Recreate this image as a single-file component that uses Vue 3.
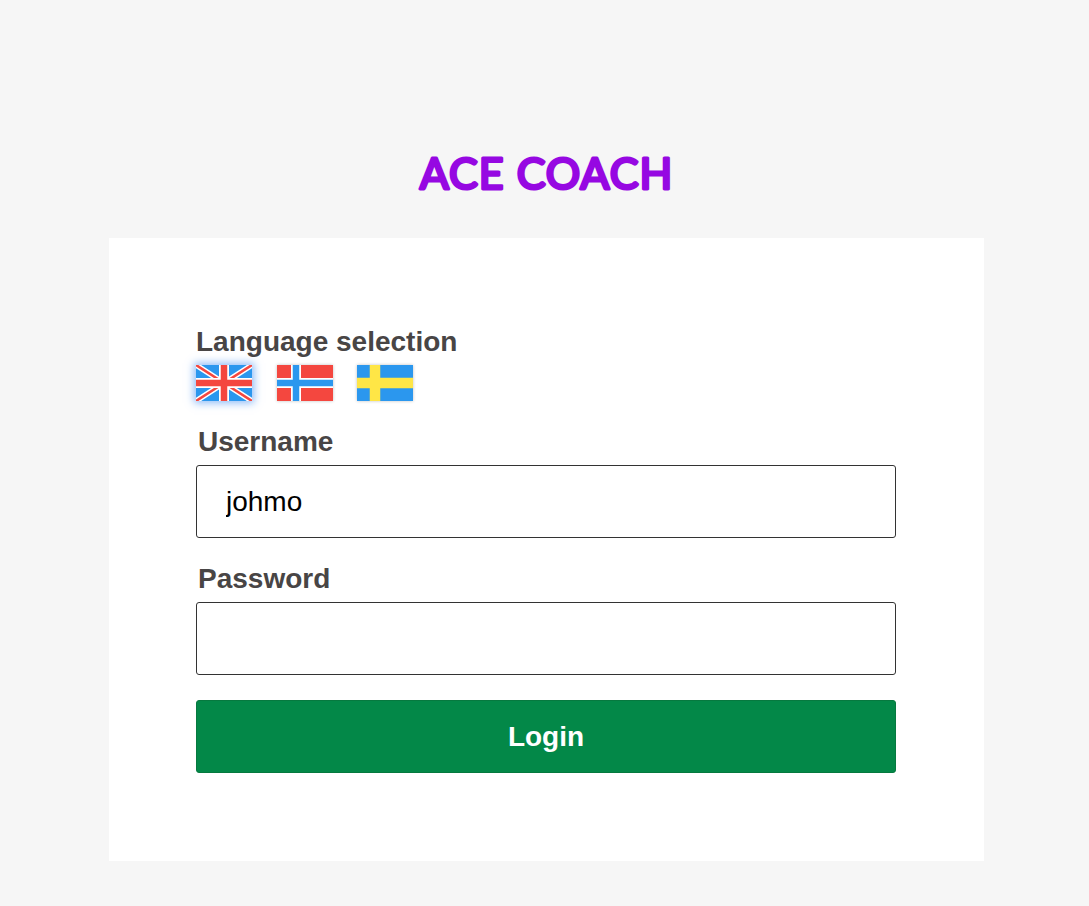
<template>
  <div class="page">
    <svg class="logo" viewBox="0 0 400 52" width="400" height="52" role="img" aria-label="ACE COACH">
      <text x="201.5" y="41" text-anchor="middle">ACE COACH</text>
    </svg>
    <div class="card">
      <form class="login-form" @submit.prevent>
        <div class="lang-title">Language selection</div>
        <div class="flags">
          <button
            v-for="flag in flags"
            :key="flag"
            type="button"
            class="flag-btn"
            :class="{ active: flag === lang }"
            @click="lang = flag"
          >
            <svg v-if="flag === 'en'" viewBox="0 0 56 36" width="56" height="36">
              <rect width="56" height="36" fill="#2b97ee" />
              <path d="M0 0L56 36M56 0L0 36" stroke="#fff" stroke-width="5.5" />
              <path d="M0 0L28 18M56 36L28 18M56 0L28 18M0 36L28 18" stroke="#f4473f" stroke-width="2.6" />
              <path d="M28 0V36M0 18H56" stroke="#fff" stroke-width="10" />
              <path d="M28 0V36M0 18H56" stroke="#f4473f" stroke-width="6.5" />
            </svg>
            <svg v-else-if="flag === 'no'" viewBox="0 0 56 36" width="56" height="36">
              <rect width="56" height="36" fill="#f4473f" />
              <path d="M19 0V36M0 18H56" stroke="#fff" stroke-width="10" />
              <path d="M19 0V36M0 18H56" stroke="#2b97ee" stroke-width="6.5" />
            </svg>
            <svg v-else viewBox="0 0 56 36" width="56" height="36">
              <rect width="56" height="36" fill="#2b97ee" />
              <path d="M18 0V36M0 18H56" stroke="#ffe646" stroke-width="10.5" />
            </svg>
          </button>
        </div>

        <label class="field-label" for="username">Username</label>
        <input id="username" v-model="username" class="field" type="text" />

        <label class="field-label" for="password">Password</label>
        <input id="password" v-model="password" class="field" type="password" />

        <button class="login-btn" type="submit">Login</button>
      </form>
    </div>
  </div>
</template>

<script setup>
import { ref } from 'vue';

const flags = ['en', 'no', 'sv'];
const lang = ref('en');
const username = ref('johmo');
const password = ref('');
</script>

<style scoped>
.page {
  min-height: 906px;
  padding-top: 148px;
  box-sizing: border-box;
  background: #f6f6f6;
  font-family: "Liberation Sans", Arial, sans-serif;
  overflow: hidden;
}

/* rounded ends come from the stroke on the real text */
.logo {
  display: block;
  margin: 0 auto 38px;
}

.logo text {
  font-family: Lato, sans-serif;
  font-size: 43px;
  font-weight: 400;
  letter-spacing: 1px;
  fill: #9608e2;
  stroke: #9608e2;
  stroke-width: 3px;
  stroke-linejoin: round;
  stroke-linecap: round;
}

.card {
  width: 875px;
  height: 623px;
  margin-left: 109px;
  padding: 87px 88px 0 87px;
  box-sizing: border-box;
  background: #fff;
}

.login-form {
  display: flex;
  flex-direction: column;
  width: 700px;
}

.lang-title {
  margin-top: 1px;
  font-size: 28px;
  font-weight: 700;
  line-height: 32px;
  color: #484545;
}

.flags {
  display: flex;
  gap: 24.5px;
  margin-top: 7px;
}

.flag-btn {
  display: block;
  width: 56px;
  height: 36px;
  padding: 0;
  border: none;
  background: none;
  cursor: pointer;
  box-shadow: 0 0 3px rgba(0, 0, 0, 0.25);
}

.flag-btn.active {
  box-shadow: 0 0 8px 2px rgba(45, 130, 240, 0.55);
}

.flag-btn svg {
  display: block;
}

.field-label {
  margin: 25px 0 7px 2px;
  font-size: 28px;
  font-weight: 700;
  line-height: 32px;
  color: #484545;
}

.field {
  box-sizing: border-box;
  width: 700px;
  height: 73px;
  padding: 0 29px;
  border: 1px solid #333;
  border-radius: 3px;
  outline: none;
  background: #fff;
  font-family: inherit;
  font-size: 28px;
  color: #000;
}

.login-btn {
  height: 73px;
  margin-top: 25px;
  border: 1px solid #06793f;
  border-radius: 3px;
  background: #038848;
  color: #fff;
  font-family: inherit;
  font-size: 28px;
  font-weight: 700;
  cursor: pointer;
}
</style>

<style>
html,
body {
  background: #f6f6f6;
}
</style>
